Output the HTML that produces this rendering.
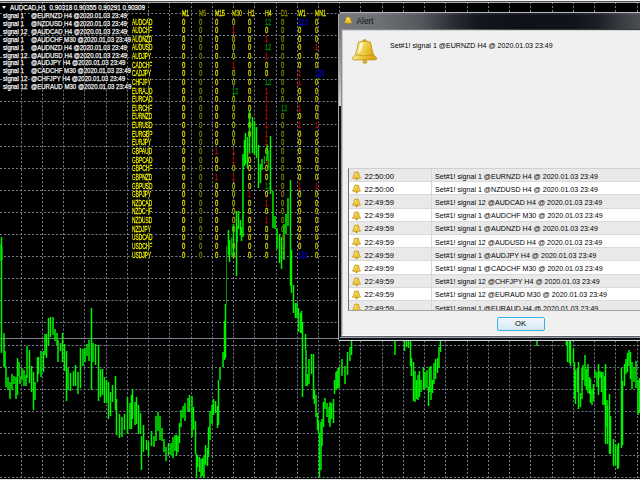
<!DOCTYPE html>
<html><head><meta charset="utf-8"><style>
html,body{margin:0;padding:0;}
body{width:640px;height:480px;overflow:hidden;background:#000;position:relative;font-family:"Liberation Sans",sans-serif;}
#top0{position:absolute;left:0;top:0;width:640px;height:1px;background:#f2f2f2}
#top1{position:absolute;left:0;top:1px;width:640px;height:1px;background:#505050}
#top2{position:absolute;left:0;top:2px;width:640px;height:1px;background:#aaaaaa}
#bot{position:absolute;left:0;top:479px;width:640px;height:1px;background:#dcdcdc}
svg.chart{position:absolute;left:0;top:0}
.sg{position:absolute;white-space:pre;background:linear-gradient(#000,#000) 0 0.6px/100% 5.6px no-repeat;font-size:7px;line-height:7px;color:#f4f4f4;-webkit-text-stroke:0.25px #f4f4f4;transform-origin:0 0;transform:scaleX(0.866)}
.tb{position:absolute;white-space:pre;background:linear-gradient(#000,#000) 0 0.7px/100% 6.4px no-repeat;will-change:transform;-webkit-text-stroke:0.3px currentColor;font-size:8.5px;line-height:8px;transform-origin:0 0;transform:scaleX(0.66)}
.tbn{transform:scaleX(0.57)}
.tbh{transform:scaleX(0.6)}
#hdr{position:absolute;left:10px;top:4px;white-space:pre;background:linear-gradient(#000,#000) 0 0.6px/100% 5.6px no-repeat;font-size:7px;line-height:7px;color:#f4f4f4;-webkit-text-stroke:0.25px #f4f4f4;transform-origin:0 0;transform:scaleX(0.892)}
#tri{position:absolute;left:1.5px;top:6px;width:0;height:0;border-left:2.5px solid transparent;border-right:2.5px solid transparent;border-top:3px solid #f0f0f0}
#ttl{position:absolute;left:356.5px;top:17px;font-size:8.3px;line-height:8px;color:#101010;}
.ic{position:absolute}
#msg{position:absolute;left:389.5px;top:42px;white-space:pre;font-size:7.6px;line-height:8px;color:#000;transform-origin:0 0;transform:scaleX(0.932)}
#lst{position:absolute;left:348px;top:168px;width:292px;height:141px;overflow:hidden;border-left:1px solid #6a7078;border-top:1px solid #d0d0d0;border-bottom:1px solid #a0a0a0;background:#fff}
.row{position:absolute;left:0;width:292px;height:13.2px;box-shadow:inset 0 -1px 0 #dadada}
.lt{position:absolute;top:3.6px;white-space:pre;font-size:7.6px;line-height:8px;color:#000;transform-origin:0 0}
#colsep{position:absolute;left:82px;top:0;width:1px;height:141px;background:#d8d8d8}
#okbtn{position:absolute;left:496.5px;top:316.5px;width:46px;height:12px;border:1px solid #3cb0e8;border-radius:2px;background:linear-gradient(#f2f8fc,#d4e8f4);text-align:center;font-size:7.6px;line-height:12px;color:#000}
</style></head><body>
<svg class="chart" width="640" height="480" viewBox="0 0 640 480">
<g stroke="#78828e" stroke-width="1"><line x1="21.5" y1="2" x2="21.5" y2="479" stroke-dasharray="1.9915 1.9915"/><line x1="42.5" y1="2" x2="42.5" y2="479" stroke-dasharray="1.9915 1.9915"/><line x1="63.5" y1="2" x2="63.5" y2="479" stroke-dasharray="1.9915 1.9915"/><line x1="84.5" y1="2" x2="84.5" y2="479" stroke-dasharray="1.9915 1.9915"/><line x1="106.5" y1="2" x2="106.5" y2="479" stroke-dasharray="1.9915 1.9915"/><line x1="127.5" y1="2" x2="127.5" y2="479" stroke-dasharray="1.9915 1.9915"/><line x1="148.5" y1="2" x2="148.5" y2="479" stroke-dasharray="1.9915 1.9915"/><line x1="169.5" y1="2" x2="169.5" y2="479" stroke-dasharray="1.9915 1.9915"/><line x1="191.5" y1="2" x2="191.5" y2="479" stroke-dasharray="1.9915 1.9915"/><line x1="212.5" y1="2" x2="212.5" y2="479" stroke-dasharray="1.9915 1.9915"/><line x1="233.5" y1="2" x2="233.5" y2="479" stroke-dasharray="1.9915 1.9915"/><line x1="254.5" y1="2" x2="254.5" y2="479" stroke-dasharray="1.9915 1.9915"/><line x1="276.5" y1="2" x2="276.5" y2="479" stroke-dasharray="1.9915 1.9915"/><line x1="297.5" y1="2" x2="297.5" y2="479" stroke-dasharray="1.9915 1.9915"/><line x1="318.5" y1="2" x2="318.5" y2="479" stroke-dasharray="1.9915 1.9915"/><line x1="339.5" y1="2" x2="339.5" y2="479" stroke-dasharray="1.9915 1.9915"/><line x1="360.5" y1="2" x2="360.5" y2="479" stroke-dasharray="1.9915 1.9915"/><line x1="382.5" y1="2" x2="382.5" y2="479" stroke-dasharray="1.9915 1.9915"/><line x1="403.5" y1="2" x2="403.5" y2="479" stroke-dasharray="1.9915 1.9915"/><line x1="424.5" y1="2" x2="424.5" y2="479" stroke-dasharray="1.9915 1.9915"/><line x1="445.5" y1="2" x2="445.5" y2="479" stroke-dasharray="1.9915 1.9915"/><line x1="467.5" y1="2" x2="467.5" y2="479" stroke-dasharray="1.9915 1.9915"/><line x1="488.5" y1="2" x2="488.5" y2="479" stroke-dasharray="1.9915 1.9915"/><line x1="509.5" y1="2" x2="509.5" y2="479" stroke-dasharray="1.9915 1.9915"/><line x1="530.5" y1="2" x2="530.5" y2="479" stroke-dasharray="1.9915 1.9915"/><line x1="552.5" y1="2" x2="552.5" y2="479" stroke-dasharray="1.9915 1.9915"/><line x1="573.5" y1="2" x2="573.5" y2="479" stroke-dasharray="1.9915 1.9915"/><line x1="594.5" y1="2" x2="594.5" y2="479" stroke-dasharray="1.9915 1.9915"/><line x1="615.5" y1="2" x2="615.5" y2="479" stroke-dasharray="1.9915 1.9915"/><line x1="637.5" y1="2" x2="637.5" y2="479" stroke-dasharray="1.9915 1.9915"/><line x1="0" y1="13.5" x2="640" y2="13.5" stroke-dasharray="1.9915 1.9915"/><line x1="0" y1="35.5" x2="640" y2="35.5" stroke-dasharray="1.9915 1.9915"/><line x1="0" y1="57.5" x2="640" y2="57.5" stroke-dasharray="1.9915 1.9915"/><line x1="0" y1="79.5" x2="640" y2="79.5" stroke-dasharray="1.9915 1.9915"/><line x1="0" y1="101.5" x2="640" y2="101.5" stroke-dasharray="1.9915 1.9915"/><line x1="0" y1="124.5" x2="640" y2="124.5" stroke-dasharray="1.9915 1.9915"/><line x1="0" y1="146.5" x2="640" y2="146.5" stroke-dasharray="1.9915 1.9915"/><line x1="0" y1="168.5" x2="640" y2="168.5" stroke-dasharray="1.9915 1.9915"/><line x1="0" y1="190.5" x2="640" y2="190.5" stroke-dasharray="1.9915 1.9915"/><line x1="0" y1="212.5" x2="640" y2="212.5" stroke-dasharray="1.9915 1.9915"/><line x1="0" y1="234.5" x2="640" y2="234.5" stroke-dasharray="1.9915 1.9915"/><line x1="0" y1="256.5" x2="640" y2="256.5" stroke-dasharray="1.9915 1.9915"/><line x1="0" y1="278.5" x2="640" y2="278.5" stroke-dasharray="1.9915 1.9915"/><line x1="0" y1="300.5" x2="640" y2="300.5" stroke-dasharray="1.9915 1.9915"/><line x1="0" y1="322.5" x2="640" y2="322.5" stroke-dasharray="1.9915 1.9915"/><line x1="0" y1="345.5" x2="640" y2="345.5" stroke-dasharray="1.9915 1.9915"/><line x1="0" y1="367.5" x2="640" y2="367.5" stroke-dasharray="1.9915 1.9915"/><line x1="0" y1="389.5" x2="640" y2="389.5" stroke-dasharray="1.9915 1.9915"/><line x1="0" y1="411.5" x2="640" y2="411.5" stroke-dasharray="1.9915 1.9915"/><line x1="0" y1="433.5" x2="640" y2="433.5" stroke-dasharray="1.9915 1.9915"/><line x1="0" y1="455.5" x2="640" y2="455.5" stroke-dasharray="1.9915 1.9915"/><line x1="0" y1="477.5" x2="640" y2="477.5" stroke-dasharray="1.9915 1.9915"/></g>
<line x1="0" y1="338.5" x2="640" y2="338.5" stroke="#78828c" stroke-width="1"/>
</svg>
<div id="top0"></div><div id="top1"></div><div id="top2"></div><div id="bot"></div>
<div id="tri"></div>
<div id="hdr">AUDCAD,H1  0.90318 0.90355 0.90291 0.90309</div>
<div class="sg" style="left:2.5px;top:12.0px">signal 1</div><div class="sg" style="left:31px;top:12.0px">@EURNZD H4 @2020.01.03 23:49</div><div class="sg" style="left:2.5px;top:19.9px">signal 1</div><div class="sg" style="left:31px;top:19.9px">@NZDUSD H4 @2020.01.03 23:49</div><div class="sg" style="left:2.5px;top:27.8px">signal 12</div><div class="sg" style="left:31px;top:27.8px">@AUDCAD H4 @2020.01.03 23:49</div><div class="sg" style="left:2.5px;top:35.7px">signal 1</div><div class="sg" style="left:31px;top:35.7px">@AUDCHF M30 @2020.01.03 23:49</div><div class="sg" style="left:2.5px;top:43.6px">signal 1</div><div class="sg" style="left:31px;top:43.6px">@AUDNZD H4 @2020.01.03 23:49</div><div class="sg" style="left:2.5px;top:51.5px">signal 12</div><div class="sg" style="left:31px;top:51.5px">@AUDUSD H4 @2020.01.03 23:49</div><div class="sg" style="left:2.5px;top:59.4px">signal 1</div><div class="sg" style="left:31px;top:59.4px">@AUDJPY H4 @2020.01.03 23:49</div><div class="sg" style="left:2.5px;top:67.3px">signal 1</div><div class="sg" style="left:31px;top:67.3px">@CADCHF M30 @2020.01.03 23:49</div><div class="sg" style="left:2.5px;top:75.2px">signal 12</div><div class="sg" style="left:31px;top:75.2px">@CHFJPY H4 @2020.01.03 23:49</div><div class="sg" style="left:2.5px;top:83.1px">signal 12</div><div class="sg" style="left:31px;top:83.1px">@EURAUD M30 @2020.01.03 23:49</div>
<div class="tb tbh" style="left:182px;top:9.1px;color:#ffff00">M1</div><div class="tb tbh" style="left:198.6px;top:9.1px;color:#949400">M5</div><div class="tb tbh" style="left:215.1px;top:9.1px;color:#f4f400">M15</div><div class="tb tbh" style="left:231.7px;top:9.1px;color:#d0d000">M30</div><div class="tb tbh" style="left:248.25px;top:9.1px;color:#f4f400">H1</div><div class="tb tbh" style="left:264.8px;top:9.1px;color:#ecec00">H4</div><div class="tb tbh" style="left:281.4px;top:9.1px;color:#989800">D1</div><div class="tb tbh" style="left:297.9px;top:9.1px;color:#f4f400">W1</div><div class="tb tbh" style="left:314.5px;top:9.1px;color:#e0e000">MN1</div><div class="tb tbn" style="left:132px;top:17.5px;color:#f4f400">AUDCAD</div><div class="tb" style="left:182px;top:17.5px;color:#ffff00">0</div><div class="tb" style="left:198.6px;top:17.5px;color:#949400">0</div><div class="tb" style="left:215.1px;top:17.5px;color:#f4f400">0</div><div class="tb" style="left:231.7px;top:17.5px;color:#d0d000">0</div><div class="tb" style="left:248.25px;top:17.5px;color:#f4f400">0</div><div class="tb" style="left:264.8px;top:17.5px;color:#008a00">12</div><div class="tb" style="left:281.4px;top:17.5px;color:#989800">0</div><div class="tb" style="left:297.9px;top:17.5px;color:#0000e0">123</div><div class="tb" style="left:314.5px;top:17.5px;color:#e0e000">0</div><div class="tb tbn" style="left:132px;top:26.1px;color:#f4f400">AUDCHF</div><div class="tb" style="left:182px;top:26.1px;color:#ffff00">0</div><div class="tb" style="left:198.6px;top:26.1px;color:#949400">0</div><div class="tb" style="left:215.1px;top:26.1px;color:#f4f400">0</div><div class="tb" style="left:231.7px;top:26.1px;color:#e00000">1</div><div class="tb" style="left:248.25px;top:26.1px;color:#f4f400">0</div><div class="tb" style="left:264.8px;top:26.1px;color:#ecec00">0</div><div class="tb" style="left:281.4px;top:26.1px;color:#989800">0</div><div class="tb" style="left:297.9px;top:26.1px;color:#f4f400">0</div><div class="tb" style="left:314.5px;top:26.1px;color:#e0e000">0</div><div class="tb tbn" style="left:132px;top:34.8px;color:#f4f400">AUDNZD</div><div class="tb" style="left:182px;top:34.8px;color:#ffff00">0</div><div class="tb" style="left:198.6px;top:34.8px;color:#949400">0</div><div class="tb" style="left:215.1px;top:34.8px;color:#f4f400">0</div><div class="tb" style="left:231.7px;top:34.8px;color:#d0d000">0</div><div class="tb" style="left:248.25px;top:34.8px;color:#f4f400">0</div><div class="tb" style="left:264.8px;top:34.8px;color:#e00000">1</div><div class="tb" style="left:281.4px;top:34.8px;color:#989800">0</div><div class="tb" style="left:297.9px;top:34.8px;color:#f4f400">0</div><div class="tb" style="left:314.5px;top:34.8px;color:#e0e000">0</div><div class="tb tbn" style="left:132px;top:43.4px;color:#f4f400">AUDUSD</div><div class="tb" style="left:182px;top:43.4px;color:#ffff00">0</div><div class="tb" style="left:198.6px;top:43.4px;color:#949400">0</div><div class="tb" style="left:215.1px;top:43.4px;color:#f4f400">0</div><div class="tb" style="left:231.7px;top:43.4px;color:#d0d000">0</div><div class="tb" style="left:248.25px;top:43.4px;color:#f4f400">0</div><div class="tb" style="left:264.8px;top:43.4px;color:#008a00">12</div><div class="tb" style="left:281.4px;top:43.4px;color:#989800">0</div><div class="tb" style="left:297.9px;top:43.4px;color:#f4f400">0</div><div class="tb" style="left:314.5px;top:43.4px;color:#e00000">1</div><div class="tb tbn" style="left:132px;top:52.0px;color:#f4f400">AUDJPY</div><div class="tb" style="left:182px;top:52.0px;color:#ffff00">0</div><div class="tb" style="left:198.6px;top:52.0px;color:#949400">0</div><div class="tb" style="left:215.1px;top:52.0px;color:#f4f400">0</div><div class="tb" style="left:231.7px;top:52.0px;color:#d0d000">0</div><div class="tb" style="left:248.25px;top:52.0px;color:#f4f400">0</div><div class="tb" style="left:264.8px;top:52.0px;color:#e00000">1</div><div class="tb" style="left:281.4px;top:52.0px;color:#989800">0</div><div class="tb" style="left:297.9px;top:52.0px;color:#f4f400">0</div><div class="tb" style="left:314.5px;top:52.0px;color:#e0e000">0</div><div class="tb tbn" style="left:132px;top:60.7px;color:#f4f400">CADCHF</div><div class="tb" style="left:182px;top:60.7px;color:#ffff00">0</div><div class="tb" style="left:198.6px;top:60.7px;color:#949400">0</div><div class="tb" style="left:215.1px;top:60.7px;color:#f4f400">0</div><div class="tb" style="left:231.7px;top:60.7px;color:#e00000">1</div><div class="tb" style="left:248.25px;top:60.7px;color:#f4f400">0</div><div class="tb" style="left:264.8px;top:60.7px;color:#ecec00">0</div><div class="tb" style="left:281.4px;top:60.7px;color:#989800">0</div><div class="tb" style="left:297.9px;top:60.7px;color:#f4f400">0</div><div class="tb" style="left:314.5px;top:60.7px;color:#e0e000">0</div><div class="tb tbn" style="left:132px;top:69.3px;color:#f4f400">CADJPY</div><div class="tb" style="left:182px;top:69.3px;color:#ffff00">0</div><div class="tb" style="left:198.6px;top:69.3px;color:#949400">0</div><div class="tb" style="left:215.1px;top:69.3px;color:#f4f400">0</div><div class="tb" style="left:231.7px;top:69.3px;color:#d0d000">0</div><div class="tb" style="left:248.25px;top:69.3px;color:#f4f400">0</div><div class="tb" style="left:264.8px;top:69.3px;color:#ecec00">0</div><div class="tb" style="left:281.4px;top:69.3px;color:#989800">0</div><div class="tb" style="left:297.9px;top:69.3px;color:#e00000">1</div><div class="tb" style="left:314.5px;top:69.3px;color:#0000e0">123</div><div class="tb tbn" style="left:132px;top:77.9px;color:#f4f400">CHFJPY</div><div class="tb" style="left:182px;top:77.9px;color:#ffff00">0</div><div class="tb" style="left:198.6px;top:77.9px;color:#949400">0</div><div class="tb" style="left:215.1px;top:77.9px;color:#f4f400">0</div><div class="tb" style="left:231.7px;top:77.9px;color:#d0d000">0</div><div class="tb" style="left:248.25px;top:77.9px;color:#f4f400">0</div><div class="tb" style="left:264.8px;top:77.9px;color:#008a00">12</div><div class="tb" style="left:281.4px;top:77.9px;color:#989800">0</div><div class="tb" style="left:297.9px;top:77.9px;color:#e00000">1</div><div class="tb" style="left:314.5px;top:77.9px;color:#e0e000">0</div><div class="tb tbn" style="left:132px;top:86.5px;color:#f4f400">EURAUD</div><div class="tb" style="left:182px;top:86.5px;color:#ffff00">0</div><div class="tb" style="left:198.6px;top:86.5px;color:#949400">0</div><div class="tb" style="left:215.1px;top:86.5px;color:#f4f400">0</div><div class="tb" style="left:231.7px;top:86.5px;color:#008a00">12</div><div class="tb" style="left:248.25px;top:86.5px;color:#f4f400">0</div><div class="tb" style="left:264.8px;top:86.5px;color:#e00000">1</div><div class="tb" style="left:281.4px;top:86.5px;color:#989800">0</div><div class="tb" style="left:297.9px;top:86.5px;color:#f4f400">0</div><div class="tb" style="left:314.5px;top:86.5px;color:#e0e000">0</div><div class="tb tbn" style="left:132px;top:95.2px;color:#f4f400">EURCAD</div><div class="tb" style="left:182px;top:95.2px;color:#ffff00">0</div><div class="tb" style="left:198.6px;top:95.2px;color:#949400">0</div><div class="tb" style="left:215.1px;top:95.2px;color:#f4f400">0</div><div class="tb" style="left:231.7px;top:95.2px;color:#d0d000">0</div><div class="tb" style="left:248.25px;top:95.2px;color:#f4f400">0</div><div class="tb" style="left:264.8px;top:95.2px;color:#e00000">1</div><div class="tb" style="left:281.4px;top:95.2px;color:#989800">0</div><div class="tb" style="left:297.9px;top:95.2px;color:#f4f400">0</div><div class="tb" style="left:314.5px;top:95.2px;color:#e0e000">0</div><div class="tb tbn" style="left:132px;top:103.8px;color:#f4f400">EURCHF</div><div class="tb" style="left:182px;top:103.8px;color:#ffff00">0</div><div class="tb" style="left:198.6px;top:103.8px;color:#949400">0</div><div class="tb" style="left:215.1px;top:103.8px;color:#f4f400">0</div><div class="tb" style="left:231.7px;top:103.8px;color:#d0d000">0</div><div class="tb" style="left:248.25px;top:103.8px;color:#f4f400">0</div><div class="tb" style="left:264.8px;top:103.8px;color:#e00000">1</div><div class="tb" style="left:281.4px;top:103.8px;color:#008a00">12</div><div class="tb" style="left:297.9px;top:103.8px;color:#e00000">1</div><div class="tb" style="left:314.5px;top:103.8px;color:#e0e000">0</div><div class="tb tbn" style="left:132px;top:112.4px;color:#f4f400">EURNZD</div><div class="tb" style="left:182px;top:112.4px;color:#ffff00">0</div><div class="tb" style="left:198.6px;top:112.4px;color:#949400">0</div><div class="tb" style="left:215.1px;top:112.4px;color:#f4f400">0</div><div class="tb" style="left:231.7px;top:112.4px;color:#d0d000">0</div><div class="tb" style="left:248.25px;top:112.4px;color:#f4f400">0</div><div class="tb" style="left:264.8px;top:112.4px;color:#e00000">1</div><div class="tb" style="left:281.4px;top:112.4px;color:#989800">0</div><div class="tb" style="left:297.9px;top:112.4px;color:#f4f400">0</div><div class="tb" style="left:314.5px;top:112.4px;color:#e0e000">0</div><div class="tb tbn" style="left:132px;top:121.1px;color:#f4f400">EURUSD</div><div class="tb" style="left:182px;top:121.1px;color:#ffff00">0</div><div class="tb" style="left:198.6px;top:121.1px;color:#949400">0</div><div class="tb" style="left:215.1px;top:121.1px;color:#f4f400">0</div><div class="tb" style="left:231.7px;top:121.1px;color:#d0d000">0</div><div class="tb" style="left:248.25px;top:121.1px;color:#f4f400">0</div><div class="tb" style="left:264.8px;top:121.1px;color:#e00000">1</div><div class="tb" style="left:281.4px;top:121.1px;color:#989800">0</div><div class="tb" style="left:297.9px;top:121.1px;color:#e00000">1</div><div class="tb" style="left:314.5px;top:121.1px;color:#e00000">1</div><div class="tb tbn" style="left:132px;top:129.7px;color:#f4f400">EURGBP</div><div class="tb" style="left:182px;top:129.7px;color:#ffff00">0</div><div class="tb" style="left:198.6px;top:129.7px;color:#949400">0</div><div class="tb" style="left:215.1px;top:129.7px;color:#f4f400">0</div><div class="tb" style="left:231.7px;top:129.7px;color:#d0d000">0</div><div class="tb" style="left:248.25px;top:129.7px;color:#f4f400">0</div><div class="tb" style="left:264.8px;top:129.7px;color:#e00000">1</div><div class="tb" style="left:281.4px;top:129.7px;color:#989800">0</div><div class="tb" style="left:297.9px;top:129.7px;color:#f4f400">0</div><div class="tb" style="left:314.5px;top:129.7px;color:#e0e000">0</div><div class="tb tbn" style="left:132px;top:138.3px;color:#f4f400">EURJPY</div><div class="tb" style="left:182px;top:138.3px;color:#ffff00">0</div><div class="tb" style="left:198.6px;top:138.3px;color:#949400">0</div><div class="tb" style="left:215.1px;top:138.3px;color:#f4f400">0</div><div class="tb" style="left:231.7px;top:138.3px;color:#d0d000">0</div><div class="tb" style="left:248.25px;top:138.3px;color:#e00000">1</div><div class="tb" style="left:264.8px;top:138.3px;color:#e00000">1</div><div class="tb" style="left:281.4px;top:138.3px;color:#989800">0</div><div class="tb" style="left:297.9px;top:138.3px;color:#f4f400">0</div><div class="tb" style="left:314.5px;top:138.3px;color:#e0e000">0</div><div class="tb tbn" style="left:132px;top:147.0px;color:#f4f400">GBPAUD</div><div class="tb" style="left:182px;top:147.0px;color:#ffff00">0</div><div class="tb" style="left:198.6px;top:147.0px;color:#949400">0</div><div class="tb" style="left:215.1px;top:147.0px;color:#e00000">1</div><div class="tb" style="left:231.7px;top:147.0px;color:#e00000">1</div><div class="tb" style="left:248.25px;top:147.0px;color:#e00000">1</div><div class="tb" style="left:264.8px;top:147.0px;color:#ecec00">0</div><div class="tb" style="left:281.4px;top:147.0px;color:#989800">0</div><div class="tb" style="left:297.9px;top:147.0px;color:#f4f400">0</div><div class="tb" style="left:314.5px;top:147.0px;color:#e0e000">0</div><div class="tb tbn" style="left:132px;top:155.6px;color:#f4f400">GBPCAD</div><div class="tb" style="left:182px;top:155.6px;color:#ffff00">0</div><div class="tb" style="left:198.6px;top:155.6px;color:#949400">0</div><div class="tb" style="left:215.1px;top:155.6px;color:#f4f400">0</div><div class="tb" style="left:231.7px;top:155.6px;color:#e00000">1</div><div class="tb" style="left:248.25px;top:155.6px;color:#f4f400">0</div><div class="tb" style="left:264.8px;top:155.6px;color:#e00000">1</div><div class="tb" style="left:281.4px;top:155.6px;color:#989800">0</div><div class="tb" style="left:297.9px;top:155.6px;color:#f4f400">0</div><div class="tb" style="left:314.5px;top:155.6px;color:#e0e000">0</div><div class="tb tbn" style="left:132px;top:164.2px;color:#f4f400">GBPCHF</div><div class="tb" style="left:182px;top:164.2px;color:#ffff00">0</div><div class="tb" style="left:198.6px;top:164.2px;color:#949400">0</div><div class="tb" style="left:215.1px;top:164.2px;color:#f4f400">0</div><div class="tb" style="left:231.7px;top:164.2px;color:#d0d000">0</div><div class="tb" style="left:248.25px;top:164.2px;color:#f4f400">0</div><div class="tb" style="left:264.8px;top:164.2px;color:#ecec00">0</div><div class="tb" style="left:281.4px;top:164.2px;color:#989800">0</div><div class="tb" style="left:297.9px;top:164.2px;color:#f4f400">0</div><div class="tb" style="left:314.5px;top:164.2px;color:#e0e000">0</div><div class="tb tbn" style="left:132px;top:172.8px;color:#f4f400">GBPNZD</div><div class="tb" style="left:182px;top:172.8px;color:#ffff00">0</div><div class="tb" style="left:198.6px;top:172.8px;color:#949400">0</div><div class="tb" style="left:215.1px;top:172.8px;color:#e00000">1</div><div class="tb" style="left:231.7px;top:172.8px;color:#e00000">1</div><div class="tb" style="left:248.25px;top:172.8px;color:#f4f400">0</div><div class="tb" style="left:264.8px;top:172.8px;color:#ecec00">0</div><div class="tb" style="left:281.4px;top:172.8px;color:#989800">0</div><div class="tb" style="left:297.9px;top:172.8px;color:#f4f400">0</div><div class="tb" style="left:314.5px;top:172.8px;color:#e0e000">0</div><div class="tb tbn" style="left:132px;top:181.5px;color:#f4f400">GBPUSD</div><div class="tb" style="left:182px;top:181.5px;color:#ffff00">0</div><div class="tb" style="left:198.6px;top:181.5px;color:#949400">0</div><div class="tb" style="left:215.1px;top:181.5px;color:#f4f400">0</div><div class="tb" style="left:231.7px;top:181.5px;color:#d0d000">0</div><div class="tb" style="left:248.25px;top:181.5px;color:#f4f400">0</div><div class="tb" style="left:264.8px;top:181.5px;color:#008a00">12</div><div class="tb" style="left:281.4px;top:181.5px;color:#989800">0</div><div class="tb" style="left:297.9px;top:181.5px;color:#e00000">1</div><div class="tb" style="left:314.5px;top:181.5px;color:#e00000">1</div><div class="tb tbn" style="left:132px;top:190.1px;color:#f4f400">GBPJPY</div><div class="tb" style="left:182px;top:190.1px;color:#ffff00">0</div><div class="tb" style="left:198.6px;top:190.1px;color:#949400">0</div><div class="tb" style="left:215.1px;top:190.1px;color:#f4f400">0</div><div class="tb" style="left:231.7px;top:190.1px;color:#d0d000">0</div><div class="tb" style="left:248.25px;top:190.1px;color:#e00000">1</div><div class="tb" style="left:264.8px;top:190.1px;color:#ecec00">0</div><div class="tb" style="left:281.4px;top:190.1px;color:#989800">0</div><div class="tb" style="left:297.9px;top:190.1px;color:#f4f400">0</div><div class="tb" style="left:314.5px;top:190.1px;color:#e0e000">0</div><div class="tb tbn" style="left:132px;top:198.7px;color:#f4f400">NZDCAD</div><div class="tb" style="left:182px;top:198.7px;color:#ffff00">0</div><div class="tb" style="left:198.6px;top:198.7px;color:#949400">0</div><div class="tb" style="left:215.1px;top:198.7px;color:#f4f400">0</div><div class="tb" style="left:231.7px;top:198.7px;color:#d0d000">0</div><div class="tb" style="left:248.25px;top:198.7px;color:#f4f400">0</div><div class="tb" style="left:264.8px;top:198.7px;color:#e00000">1</div><div class="tb" style="left:281.4px;top:198.7px;color:#989800">0</div><div class="tb" style="left:297.9px;top:198.7px;color:#f4f400">0</div><div class="tb" style="left:314.5px;top:198.7px;color:#e0e000">0</div><div class="tb tbn" style="left:132px;top:207.4px;color:#f4f400">NZDCHF</div><div class="tb" style="left:182px;top:207.4px;color:#ffff00">0</div><div class="tb" style="left:198.6px;top:207.4px;color:#949400">0</div><div class="tb" style="left:215.1px;top:207.4px;color:#f4f400">0</div><div class="tb" style="left:231.7px;top:207.4px;color:#d0d000">0</div><div class="tb" style="left:248.25px;top:207.4px;color:#f4f400">0</div><div class="tb" style="left:264.8px;top:207.4px;color:#ecec00">0</div><div class="tb" style="left:281.4px;top:207.4px;color:#989800">0</div><div class="tb" style="left:297.9px;top:207.4px;color:#f4f400">0</div><div class="tb" style="left:314.5px;top:207.4px;color:#e0e000">0</div><div class="tb tbn" style="left:132px;top:216.0px;color:#f4f400">NZDUSD</div><div class="tb" style="left:182px;top:216.0px;color:#ffff00">0</div><div class="tb" style="left:198.6px;top:216.0px;color:#949400">0</div><div class="tb" style="left:215.1px;top:216.0px;color:#f4f400">0</div><div class="tb" style="left:231.7px;top:216.0px;color:#d0d000">0</div><div class="tb" style="left:248.25px;top:216.0px;color:#f4f400">0</div><div class="tb" style="left:264.8px;top:216.0px;color:#e00000">1</div><div class="tb" style="left:281.4px;top:216.0px;color:#989800">0</div><div class="tb" style="left:297.9px;top:216.0px;color:#f4f400">0</div><div class="tb" style="left:314.5px;top:216.0px;color:#e0e000">0</div><div class="tb tbn" style="left:132px;top:224.6px;color:#f4f400">NZDJPY</div><div class="tb" style="left:182px;top:224.6px;color:#ffff00">0</div><div class="tb" style="left:198.6px;top:224.6px;color:#949400">0</div><div class="tb" style="left:215.1px;top:224.6px;color:#f4f400">0</div><div class="tb" style="left:231.7px;top:224.6px;color:#d0d000">0</div><div class="tb" style="left:248.25px;top:224.6px;color:#f4f400">0</div><div class="tb" style="left:264.8px;top:224.6px;color:#ecec00">0</div><div class="tb" style="left:281.4px;top:224.6px;color:#989800">0</div><div class="tb" style="left:297.9px;top:224.6px;color:#f4f400">0</div><div class="tb" style="left:314.5px;top:224.6px;color:#e0e000">0</div><div class="tb tbn" style="left:132px;top:233.3px;color:#f4f400">USDCAD</div><div class="tb" style="left:182px;top:233.3px;color:#ffff00">0</div><div class="tb" style="left:198.6px;top:233.3px;color:#949400">0</div><div class="tb" style="left:215.1px;top:233.3px;color:#f4f400">0</div><div class="tb" style="left:231.7px;top:233.3px;color:#e00000">1</div><div class="tb" style="left:248.25px;top:233.3px;color:#f4f400">0</div><div class="tb" style="left:264.8px;top:233.3px;color:#ecec00">0</div><div class="tb" style="left:281.4px;top:233.3px;color:#e00000">1</div><div class="tb" style="left:297.9px;top:233.3px;color:#f4f400">0</div><div class="tb" style="left:314.5px;top:233.3px;color:#e0e000">0</div><div class="tb tbn" style="left:132px;top:241.9px;color:#f4f400">USDCHF</div><div class="tb" style="left:182px;top:241.9px;color:#ffff00">0</div><div class="tb" style="left:198.6px;top:241.9px;color:#949400">0</div><div class="tb" style="left:215.1px;top:241.9px;color:#f4f400">0</div><div class="tb" style="left:231.7px;top:241.9px;color:#d0d000">0</div><div class="tb" style="left:248.25px;top:241.9px;color:#f4f400">0</div><div class="tb" style="left:264.8px;top:241.9px;color:#ecec00">0</div><div class="tb" style="left:281.4px;top:241.9px;color:#e00000">1</div><div class="tb" style="left:297.9px;top:241.9px;color:#f4f400">0</div><div class="tb" style="left:314.5px;top:241.9px;color:#e0e000">0</div><div class="tb tbn" style="left:132px;top:250.5px;color:#f4f400">USDJPY</div><div class="tb" style="left:182px;top:250.5px;color:#ffff00">0</div><div class="tb" style="left:198.6px;top:250.5px;color:#949400">0</div><div class="tb" style="left:215.1px;top:250.5px;color:#f4f400">0</div><div class="tb" style="left:231.7px;top:250.5px;color:#d0d000">0</div><div class="tb" style="left:248.25px;top:250.5px;color:#f4f400">0</div><div class="tb" style="left:264.8px;top:250.5px;color:#ecec00">0</div><div class="tb" style="left:281.4px;top:250.5px;color:#989800">0</div><div class="tb" style="left:297.9px;top:250.5px;color:#0000e0">123</div><div class="tb" style="left:314.5px;top:250.5px;color:#e0e000">0</div>
<svg class="chart" width="640" height="480" viewBox="0 0 640 480">
<g><line x1="0.5" y1="244.0" x2="0.5" y2="261.0" stroke="#009000" stroke-width="1.0"/><line x1="1.5" y1="237.0" x2="1.5" y2="353.0" stroke="#00f400" stroke-width="1.5"/><line x1="2.5" y1="247.0" x2="2.5" y2="260.0" stroke="#009000" stroke-width="1.0"/><line x1="4.0" y1="333.0" x2="4.0" y2="367.0" stroke="#00f400" stroke-width="1.5"/><line x1="5.0" y1="351.0" x2="5.0" y2="366.0" stroke="#00f400" stroke-width="1.5"/><line x1="6.0" y1="366.0" x2="6.0" y2="387.0" stroke="#00f400" stroke-width="1.5"/><line x1="8.0" y1="377.0" x2="8.0" y2="390.0" stroke="#00f400" stroke-width="1.5"/><line x1="10.0" y1="382.0" x2="10.0" y2="399.0" stroke="#00f400" stroke-width="1.5"/><line x1="12.0" y1="374.0" x2="12.0" y2="390.0" stroke="#00f400" stroke-width="1.5"/><line x1="14.0" y1="376.0" x2="14.0" y2="384.0" stroke="#00f400" stroke-width="1.5"/><line x1="16.0" y1="377.0" x2="16.0" y2="399.0" stroke="#00f400" stroke-width="1.5"/><line x1="17.5" y1="358.0" x2="17.5" y2="395.0" stroke="#00f400" stroke-width="1.5"/><line x1="19.0" y1="362.0" x2="19.0" y2="376.0" stroke="#00f400" stroke-width="1.5"/><line x1="20.0" y1="376.0" x2="20.0" y2="384.0" stroke="#00f400" stroke-width="1.5"/><line x1="22.0" y1="368.0" x2="22.0" y2="380.0" stroke="#00f400" stroke-width="1.5"/><line x1="24.0" y1="370.0" x2="24.0" y2="386.0" stroke="#00f400" stroke-width="1.5"/><line x1="26.0" y1="375.0" x2="26.0" y2="386.0" stroke="#00f400" stroke-width="1.5"/><line x1="27.0" y1="346.0" x2="27.0" y2="378.0" stroke="#00f400" stroke-width="1.5"/><line x1="29.5" y1="350.0" x2="29.5" y2="383.0" stroke="#00f400" stroke-width="1.5"/><line x1="31.5" y1="366.0" x2="31.5" y2="392.0" stroke="#00f400" stroke-width="1.5"/><line x1="33.5" y1="372.0" x2="33.5" y2="410.0" stroke="#00f400" stroke-width="1.5"/><line x1="35.0" y1="382.0" x2="35.0" y2="400.0" stroke="#00f400" stroke-width="1.5"/><line x1="37.5" y1="357.0" x2="37.5" y2="382.0" stroke="#00f400" stroke-width="1.5"/><line x1="38.5" y1="357.0" x2="38.5" y2="374.0" stroke="#00f400" stroke-width="1.5"/><line x1="41.0" y1="351.0" x2="41.0" y2="377.0" stroke="#00f400" stroke-width="1.5"/><line x1="43.5" y1="351.0" x2="43.5" y2="372.0" stroke="#00f400" stroke-width="1.5"/><line x1="45.0" y1="334.0" x2="45.0" y2="355.0" stroke="#00f400" stroke-width="1.5"/><line x1="46.5" y1="334.0" x2="46.5" y2="358.0" stroke="#00f400" stroke-width="1.5"/><line x1="48.5" y1="318.0" x2="48.5" y2="345.0" stroke="#00f400" stroke-width="1.5"/><line x1="50.5" y1="317.0" x2="50.5" y2="337.0" stroke="#00f400" stroke-width="1.5"/><line x1="53.0" y1="317.0" x2="53.0" y2="335.0" stroke="#00f400" stroke-width="1.5"/><line x1="55.0" y1="329.0" x2="55.0" y2="341.0" stroke="#00f400" stroke-width="1.5"/><line x1="57.0" y1="333.0" x2="57.0" y2="345.0" stroke="#00f400" stroke-width="1.5"/><line x1="58.0" y1="340.0" x2="58.0" y2="362.0" stroke="#00f400" stroke-width="1.5"/><line x1="60.5" y1="343.0" x2="60.5" y2="351.0" stroke="#00f400" stroke-width="1.5"/><line x1="62.5" y1="333.0" x2="62.5" y2="362.0" stroke="#00f400" stroke-width="1.5"/><line x1="64.5" y1="344.0" x2="64.5" y2="371.0" stroke="#00f400" stroke-width="1.5"/><line x1="66.5" y1="351.0" x2="66.5" y2="401.0" stroke="#00f400" stroke-width="1.5"/><line x1="68.0" y1="368.0" x2="68.0" y2="390.0" stroke="#00f400" stroke-width="1.5"/><line x1="70.5" y1="373.0" x2="70.5" y2="391.0" stroke="#00f400" stroke-width="1.5"/><line x1="73.5" y1="371.0" x2="73.5" y2="386.0" stroke="#00f400" stroke-width="1.5"/><line x1="75.5" y1="365.0" x2="75.5" y2="386.0" stroke="#00f400" stroke-width="1.5"/><line x1="78.0" y1="372.0" x2="78.0" y2="394.0" stroke="#00f400" stroke-width="1.5"/><line x1="80.5" y1="348.0" x2="80.5" y2="388.0" stroke="#00f400" stroke-width="1.5"/><line x1="83.0" y1="349.0" x2="83.0" y2="366.0" stroke="#00f400" stroke-width="1.5"/><line x1="85.0" y1="348.0" x2="85.0" y2="362.0" stroke="#00f400" stroke-width="1.5"/><line x1="87.0" y1="344.0" x2="87.0" y2="356.0" stroke="#00f400" stroke-width="1.5"/><line x1="89.0" y1="340.0" x2="89.0" y2="361.0" stroke="#00f400" stroke-width="1.5"/><line x1="91.5" y1="308.0" x2="91.5" y2="390.0" stroke="#00f400" stroke-width="1.5"/><line x1="93.0" y1="343.0" x2="93.0" y2="362.0" stroke="#00f400" stroke-width="1.5"/><line x1="95.5" y1="344.0" x2="95.5" y2="365.0" stroke="#00f400" stroke-width="1.5"/><line x1="98.5" y1="345.0" x2="98.5" y2="401.0" stroke="#00f400" stroke-width="1.5"/><line x1="100.5" y1="369.0" x2="100.5" y2="397.0" stroke="#00f400" stroke-width="1.5"/><line x1="102.5" y1="369.0" x2="102.5" y2="395.0" stroke="#00f400" stroke-width="1.5"/><line x1="104.5" y1="377.0" x2="104.5" y2="403.0" stroke="#00f400" stroke-width="1.5"/><line x1="106.5" y1="380.0" x2="106.5" y2="403.0" stroke="#00f400" stroke-width="1.5"/><line x1="108.5" y1="382.0" x2="108.5" y2="419.0" stroke="#00f400" stroke-width="1.5"/><line x1="110.5" y1="392.0" x2="110.5" y2="416.0" stroke="#00f400" stroke-width="1.5"/><line x1="112.5" y1="385.0" x2="112.5" y2="402.0" stroke="#00f400" stroke-width="1.5"/><line x1="115.5" y1="376.0" x2="115.5" y2="410.0" stroke="#00f400" stroke-width="1.5"/><line x1="116.5" y1="399.0" x2="116.5" y2="435.0" stroke="#00f400" stroke-width="1.5"/><line x1="119.5" y1="414.0" x2="119.5" y2="438.0" stroke="#00f400" stroke-width="1.5"/><line x1="122.0" y1="417.0" x2="122.0" y2="437.0" stroke="#00f400" stroke-width="1.5"/><line x1="124.5" y1="414.0" x2="124.5" y2="430.0" stroke="#00f400" stroke-width="1.5"/><line x1="127.5" y1="397.0" x2="127.5" y2="434.0" stroke="#00f400" stroke-width="1.5"/><line x1="130.0" y1="403.0" x2="130.0" y2="429.0" stroke="#00f400" stroke-width="1.5"/><line x1="131.5" y1="395.0" x2="131.5" y2="429.0" stroke="#00f400" stroke-width="1.5"/><line x1="132.5" y1="389.0" x2="132.5" y2="419.0" stroke="#00f400" stroke-width="1.5"/><line x1="135.0" y1="402.0" x2="135.0" y2="425.0" stroke="#00f400" stroke-width="1.5"/><line x1="136.5" y1="397.0" x2="136.5" y2="424.0" stroke="#00f400" stroke-width="1.5"/><line x1="138.5" y1="405.0" x2="138.5" y2="434.0" stroke="#00f400" stroke-width="1.5"/><line x1="140.5" y1="413.0" x2="140.5" y2="434.0" stroke="#00f400" stroke-width="1.5"/><line x1="141.5" y1="436.0" x2="141.5" y2="470.0" stroke="#00f400" stroke-width="1.5"/><line x1="143.5" y1="425.0" x2="143.5" y2="452.0" stroke="#00f400" stroke-width="1.5"/><line x1="146.5" y1="440.0" x2="146.5" y2="450.0" stroke="#00f400" stroke-width="1.5"/><line x1="148.5" y1="442.0" x2="148.5" y2="456.0" stroke="#00f400" stroke-width="1.5"/><line x1="151.5" y1="431.0" x2="151.5" y2="446.0" stroke="#00f400" stroke-width="1.5"/><line x1="154.0" y1="436.0" x2="154.0" y2="447.0" stroke="#00f400" stroke-width="1.5"/><line x1="156.0" y1="416.0" x2="156.0" y2="441.0" stroke="#00f400" stroke-width="1.5"/><line x1="158.0" y1="412.0" x2="158.0" y2="431.0" stroke="#00f400" stroke-width="1.5"/><line x1="160.0" y1="416.0" x2="160.0" y2="440.0" stroke="#00f400" stroke-width="1.5"/><line x1="162.0" y1="428.0" x2="162.0" y2="441.0" stroke="#00f400" stroke-width="1.5"/><line x1="164.0" y1="439.0" x2="164.0" y2="452.0" stroke="#00f400" stroke-width="1.5"/><line x1="166.0" y1="447.0" x2="166.0" y2="461.0" stroke="#00f400" stroke-width="1.5"/><line x1="168.5" y1="443.0" x2="168.5" y2="455.0" stroke="#00f400" stroke-width="1.5"/><line x1="171.0" y1="443.0" x2="171.0" y2="455.0" stroke="#00f400" stroke-width="1.5"/><line x1="173.0" y1="437.0" x2="173.0" y2="458.0" stroke="#00f400" stroke-width="1.5"/><line x1="175.0" y1="435.0" x2="175.0" y2="451.0" stroke="#00f400" stroke-width="1.5"/><line x1="176.5" y1="435.0" x2="176.5" y2="456.0" stroke="#00f400" stroke-width="1.5"/><line x1="178.0" y1="436.0" x2="178.0" y2="452.0" stroke="#00f400" stroke-width="1.5"/><line x1="179.5" y1="423.0" x2="179.5" y2="443.0" stroke="#00f400" stroke-width="1.5"/><line x1="181.0" y1="410.0" x2="181.0" y2="427.0" stroke="#00f400" stroke-width="1.5"/><line x1="183.0" y1="406.0" x2="183.0" y2="418.0" stroke="#00f400" stroke-width="1.5"/><line x1="185.0" y1="403.0" x2="185.0" y2="421.0" stroke="#00f400" stroke-width="1.5"/><line x1="188.0" y1="398.0" x2="188.0" y2="412.0" stroke="#00f400" stroke-width="1.5"/><line x1="189.5" y1="395.0" x2="189.5" y2="412.0" stroke="#00f400" stroke-width="1.5"/><line x1="192.0" y1="396.0" x2="192.0" y2="437.0" stroke="#00f400" stroke-width="1.5"/><line x1="193.5" y1="407.0" x2="193.5" y2="430.0" stroke="#00f400" stroke-width="1.5"/><line x1="195.5" y1="421.0" x2="195.5" y2="454.0" stroke="#00f400" stroke-width="1.5"/><line x1="196.5" y1="454.0" x2="196.5" y2="478.0" stroke="#00f400" stroke-width="1.5"/><line x1="197.5" y1="455.0" x2="197.5" y2="467.0" stroke="#00f400" stroke-width="1.5"/><line x1="199.5" y1="457.0" x2="199.5" y2="472.0" stroke="#00f400" stroke-width="1.5"/><line x1="201.0" y1="459.0" x2="201.0" y2="478.0" stroke="#00f400" stroke-width="1.5"/><line x1="202.5" y1="458.0" x2="202.5" y2="476.0" stroke="#00f400" stroke-width="1.5"/><line x1="204.0" y1="456.0" x2="204.0" y2="478.0" stroke="#00f400" stroke-width="1.5"/><line x1="205.5" y1="445.0" x2="205.5" y2="465.0" stroke="#00f400" stroke-width="1.5"/><line x1="207.5" y1="448.0" x2="207.5" y2="466.0" stroke="#00f400" stroke-width="1.5"/><line x1="208.5" y1="427.0" x2="208.5" y2="457.0" stroke="#00f400" stroke-width="1.5"/><line x1="210.0" y1="411.0" x2="210.0" y2="440.0" stroke="#00f400" stroke-width="1.5"/><line x1="212.0" y1="405.0" x2="212.0" y2="424.0" stroke="#00f400" stroke-width="1.5"/><line x1="213.5" y1="399.0" x2="213.5" y2="415.0" stroke="#00f400" stroke-width="1.5"/><line x1="215.5" y1="401.0" x2="215.5" y2="413.0" stroke="#00f400" stroke-width="1.5"/><line x1="217.5" y1="406.0" x2="217.5" y2="428.0" stroke="#00f400" stroke-width="1.5"/><line x1="218.5" y1="380.0" x2="218.5" y2="425.0" stroke="#00f400" stroke-width="1.5"/><line x1="220.0" y1="367.0" x2="220.0" y2="380.0" stroke="#00f400" stroke-width="1.5"/><line x1="223.0" y1="352.0" x2="223.0" y2="367.0" stroke="#00f400" stroke-width="1.5"/><line x1="224.5" y1="321.0" x2="224.5" y2="360.0" stroke="#00f400" stroke-width="1.5"/><line x1="225.5" y1="304.0" x2="225.5" y2="358.0" stroke="#00f400" stroke-width="1.5"/><line x1="226.5" y1="246.0" x2="226.5" y2="305.0" stroke="#009000" stroke-width="1.0"/><line x1="228.5" y1="230.0" x2="228.5" y2="255.0" stroke="#00f400" stroke-width="1.5"/><line x1="229.5" y1="240.0" x2="229.5" y2="262.0" stroke="#00f400" stroke-width="1.5"/><line x1="231.5" y1="237.4" x2="231.5" y2="255.5" stroke="#00a800" stroke-width="1.3"/><line x1="233.5" y1="224.0" x2="233.5" y2="257.0" stroke="#00f400" stroke-width="1.5"/><line x1="236.5" y1="211.0" x2="236.5" y2="276.0" stroke="#00f400" stroke-width="1.5"/><line x1="237.0" y1="226.0" x2="237.0" y2="242.0" stroke="#00f400" stroke-width="1.5"/><line x1="238.5" y1="211.0" x2="238.5" y2="229.0" stroke="#00f400" stroke-width="1.5"/><line x1="240.5" y1="220.0" x2="240.5" y2="235.0" stroke="#00f400" stroke-width="1.5"/><line x1="241.5" y1="227.0" x2="241.5" y2="241.0" stroke="#00f400" stroke-width="1.5"/><line x1="243.0" y1="154.0" x2="243.0" y2="237.0" stroke="#00f400" stroke-width="1.5"/><line x1="244.5" y1="140.0" x2="244.5" y2="166.0" stroke="#00f400" stroke-width="1.5"/><line x1="245.5" y1="133.0" x2="245.5" y2="164.0" stroke="#00f400" stroke-width="1.5"/><line x1="247.5" y1="137.0" x2="247.5" y2="168.0" stroke="#00f400" stroke-width="1.5"/><line x1="249.5" y1="110.0" x2="249.5" y2="153.0" stroke="#00f400" stroke-width="1.5"/><line x1="252.5" y1="117.0" x2="252.5" y2="153.0" stroke="#00f400" stroke-width="1.5"/><line x1="254.5" y1="121.0" x2="254.5" y2="155.0" stroke="#00f400" stroke-width="1.5"/><line x1="256.5" y1="127.0" x2="256.5" y2="158.0" stroke="#00f400" stroke-width="1.5"/><line x1="258.5" y1="145.0" x2="258.5" y2="188.0" stroke="#00f400" stroke-width="1.5"/><line x1="260.5" y1="164.0" x2="260.5" y2="183.0" stroke="#00f400" stroke-width="1.5"/><line x1="262.0" y1="159.0" x2="262.0" y2="170.0" stroke="#00f400" stroke-width="1.5"/><line x1="264.5" y1="156.0" x2="264.5" y2="163.9" stroke="#00a800" stroke-width="1.3"/><line x1="267.0" y1="145.0" x2="267.0" y2="161.0" stroke="#00f400" stroke-width="1.5"/><line x1="268.5" y1="150.1" x2="268.5" y2="169.7" stroke="#00a800" stroke-width="1.3"/><line x1="270.5" y1="136.0" x2="270.5" y2="194.0" stroke="#00f400" stroke-width="1.5"/><line x1="273.0" y1="191.0" x2="273.0" y2="228.0" stroke="#00f400" stroke-width="1.5"/><line x1="275.0" y1="216.0" x2="275.0" y2="229.0" stroke="#00f400" stroke-width="1.5"/><line x1="277.0" y1="228.0" x2="277.0" y2="249.0" stroke="#00f400" stroke-width="1.5"/><line x1="279.5" y1="234.0" x2="279.5" y2="263.0" stroke="#00f400" stroke-width="1.5"/><line x1="281.5" y1="237.0" x2="281.5" y2="269.0" stroke="#00f400" stroke-width="1.5"/><line x1="284.0" y1="224.0" x2="284.0" y2="260.0" stroke="#00f400" stroke-width="1.5"/><line x1="286.0" y1="214.0" x2="286.0" y2="234.0" stroke="#00f400" stroke-width="1.5"/><line x1="288.0" y1="198.0" x2="288.0" y2="226.0" stroke="#00f400" stroke-width="1.5"/><line x1="290.5" y1="180.0" x2="290.5" y2="286.0" stroke="#00f400" stroke-width="1.5"/><line x1="291.5" y1="250.0" x2="291.5" y2="293.0" stroke="#00f400" stroke-width="1.5"/><line x1="293.5" y1="285.0" x2="293.5" y2="313.0" stroke="#00f400" stroke-width="1.5"/><line x1="295.5" y1="303.0" x2="295.5" y2="318.0" stroke="#00f400" stroke-width="1.5"/><line x1="297.0" y1="303.0" x2="297.0" y2="318.0" stroke="#00f400" stroke-width="1.5"/><line x1="298.5" y1="308.0" x2="298.5" y2="332.0" stroke="#00f400" stroke-width="1.5"/><line x1="300.5" y1="313.0" x2="300.5" y2="333.0" stroke="#00f400" stroke-width="1.5"/><line x1="301.5" y1="311.0" x2="301.5" y2="333.0" stroke="#00f400" stroke-width="1.5"/><line x1="302.5" y1="322.0" x2="302.5" y2="397.0" stroke="#00f400" stroke-width="1.5"/><line x1="305.5" y1="334.0" x2="305.5" y2="350.0" stroke="#00f400" stroke-width="1.5"/><line x1="306.0" y1="350.0" x2="306.0" y2="386.0" stroke="#00f400" stroke-width="1.5"/><line x1="307.5" y1="374.0" x2="307.5" y2="386.0" stroke="#00f400" stroke-width="1.5"/><line x1="309.0" y1="359.0" x2="309.0" y2="384.0" stroke="#00f400" stroke-width="1.5"/><line x1="311.5" y1="354.0" x2="311.5" y2="374.0" stroke="#00f400" stroke-width="1.5"/><line x1="313.5" y1="354.0" x2="313.5" y2="399.0" stroke="#00f400" stroke-width="1.5"/><line x1="314.5" y1="390.0" x2="314.5" y2="404.0" stroke="#00f400" stroke-width="1.5"/><line x1="316.0" y1="395.0" x2="316.0" y2="417.0" stroke="#00f400" stroke-width="1.5"/><line x1="317.5" y1="413.0" x2="317.5" y2="430.0" stroke="#00f400" stroke-width="1.5"/><line x1="318.5" y1="420.0" x2="318.5" y2="434.0" stroke="#00f400" stroke-width="1.5"/><line x1="319.5" y1="433.0" x2="319.5" y2="477.0" stroke="#00f400" stroke-width="1.5"/><line x1="321.0" y1="422.0" x2="321.0" y2="470.0" stroke="#00f400" stroke-width="1.5"/><line x1="322.0" y1="419.0" x2="322.0" y2="446.0" stroke="#00f400" stroke-width="1.5"/><line x1="323.5" y1="402.0" x2="323.5" y2="427.0" stroke="#00f400" stroke-width="1.5"/><line x1="325.0" y1="398.0" x2="325.0" y2="409.0" stroke="#00f400" stroke-width="1.5"/><line x1="327.0" y1="403.0" x2="327.0" y2="417.0" stroke="#00f400" stroke-width="1.5"/><line x1="329.0" y1="407.0" x2="329.0" y2="423.0" stroke="#00f400" stroke-width="1.5"/><line x1="330.0" y1="402.0" x2="330.0" y2="427.0" stroke="#00f400" stroke-width="1.5"/><line x1="331.5" y1="403.0" x2="331.5" y2="419.0" stroke="#00f400" stroke-width="1.5"/><line x1="333.5" y1="399.0" x2="333.5" y2="423.0" stroke="#00f400" stroke-width="1.5"/><line x1="334.5" y1="380.0" x2="334.5" y2="394.0" stroke="#00f400" stroke-width="1.5"/><line x1="336.0" y1="372.0" x2="336.0" y2="390.0" stroke="#00f400" stroke-width="1.5"/><line x1="337.0" y1="371.0" x2="337.0" y2="389.0" stroke="#00f400" stroke-width="1.5"/><line x1="338.0" y1="368.0" x2="338.0" y2="388.0" stroke="#00f400" stroke-width="1.5"/><line x1="339.0" y1="367.0" x2="339.0" y2="388.0" stroke="#00f400" stroke-width="1.5"/><line x1="342.0" y1="359.0" x2="342.0" y2="376.0" stroke="#00f400" stroke-width="1.5"/><line x1="345.0" y1="366.0" x2="345.0" y2="384.0" stroke="#00f400" stroke-width="1.5"/><line x1="347.5" y1="352.0" x2="347.5" y2="375.0" stroke="#00f400" stroke-width="1.5"/><line x1="350.0" y1="347.0" x2="350.0" y2="361.0" stroke="#00f400" stroke-width="1.5"/><line x1="351.5" y1="340.0" x2="351.5" y2="355.0" stroke="#00f400" stroke-width="1.5"/><line x1="395.0" y1="336.0" x2="395.0" y2="355.0" stroke="#00f400" stroke-width="1.5"/><line x1="404.5" y1="336.0" x2="404.5" y2="351.0" stroke="#00f400" stroke-width="1.5"/><line x1="406.5" y1="336.0" x2="406.5" y2="347.0" stroke="#00f400" stroke-width="1.5"/><line x1="408.5" y1="336.0" x2="408.5" y2="348.0" stroke="#00f400" stroke-width="1.5"/><line x1="410.5" y1="336.0" x2="410.5" y2="366.0" stroke="#00f400" stroke-width="1.5"/><line x1="411.5" y1="358.0" x2="411.5" y2="376.0" stroke="#00f400" stroke-width="1.5"/><line x1="413.5" y1="362.0" x2="413.5" y2="401.0" stroke="#00f400" stroke-width="1.5"/><line x1="415.0" y1="371.0" x2="415.0" y2="402.0" stroke="#00f400" stroke-width="1.5"/><line x1="416.5" y1="380.0" x2="416.5" y2="399.0" stroke="#00f400" stroke-width="1.5"/><line x1="418.0" y1="375.0" x2="418.0" y2="400.0" stroke="#00f400" stroke-width="1.5"/><line x1="419.5" y1="371.0" x2="419.5" y2="397.0" stroke="#00f400" stroke-width="1.5"/><line x1="421.0" y1="380.0" x2="421.0" y2="392.0" stroke="#00f400" stroke-width="1.5"/><line x1="423.5" y1="367.0" x2="423.5" y2="389.0" stroke="#00f400" stroke-width="1.5"/><line x1="425.0" y1="372.0" x2="425.0" y2="389.0" stroke="#00f400" stroke-width="1.5"/><line x1="427.0" y1="370.0" x2="427.0" y2="388.0" stroke="#00f400" stroke-width="1.5"/><line x1="428.5" y1="387.0" x2="428.5" y2="406.0" stroke="#00f400" stroke-width="1.5"/><line x1="429.5" y1="367.0" x2="429.5" y2="392.0" stroke="#00f400" stroke-width="1.5"/><line x1="431.0" y1="366.0" x2="431.0" y2="400.0" stroke="#00f400" stroke-width="1.5"/><line x1="432.5" y1="380.0" x2="432.5" y2="393.0" stroke="#00f400" stroke-width="1.5"/><line x1="434.0" y1="363.0" x2="434.0" y2="384.0" stroke="#00f400" stroke-width="1.5"/><line x1="435.5" y1="359.0" x2="435.5" y2="379.0" stroke="#00f400" stroke-width="1.5"/><line x1="437.5" y1="358.0" x2="437.5" y2="373.0" stroke="#00f400" stroke-width="1.5"/><line x1="439.0" y1="347.0" x2="439.0" y2="368.0" stroke="#00f400" stroke-width="1.5"/><line x1="440.5" y1="336.0" x2="440.5" y2="352.0" stroke="#00f400" stroke-width="1.5"/><line x1="537.0" y1="336.0" x2="537.0" y2="346.0" stroke="#00f400" stroke-width="1.5"/><line x1="566.5" y1="336.0" x2="566.5" y2="345.0" stroke="#00f400" stroke-width="1.5"/><line x1="567.5" y1="336.0" x2="567.5" y2="362.0" stroke="#00f400" stroke-width="1.5"/><line x1="569.5" y1="336.0" x2="569.5" y2="363.0" stroke="#00f400" stroke-width="1.5"/><line x1="570.5" y1="336.0" x2="570.5" y2="366.0" stroke="#00f400" stroke-width="1.5"/><line x1="573.5" y1="348.0" x2="573.5" y2="363.0" stroke="#00f400" stroke-width="1.5"/><line x1="574.5" y1="362.0" x2="574.5" y2="399.0" stroke="#00f400" stroke-width="1.5"/><line x1="575.5" y1="370.0" x2="575.5" y2="404.0" stroke="#00f400" stroke-width="1.5"/><line x1="577.5" y1="368.0" x2="577.5" y2="392.0" stroke="#00f400" stroke-width="1.5"/><line x1="578.5" y1="362.0" x2="578.5" y2="409.0" stroke="#00f400" stroke-width="1.5"/><line x1="580.5" y1="393.0" x2="580.5" y2="407.0" stroke="#00f400" stroke-width="1.5"/><line x1="582.0" y1="368.0" x2="582.0" y2="399.0" stroke="#00f400" stroke-width="1.5"/><line x1="583.0" y1="365.0" x2="583.0" y2="380.0" stroke="#00f400" stroke-width="1.5"/><line x1="585.0" y1="355.0" x2="585.0" y2="386.0" stroke="#00f400" stroke-width="1.5"/><line x1="586.5" y1="369.0" x2="586.5" y2="390.0" stroke="#00f400" stroke-width="1.5"/><line x1="588.0" y1="364.0" x2="588.0" y2="393.0" stroke="#00f400" stroke-width="1.5"/><line x1="589.5" y1="377.0" x2="589.5" y2="394.0" stroke="#00f400" stroke-width="1.5"/><line x1="590.5" y1="379.0" x2="590.5" y2="403.0" stroke="#00f400" stroke-width="1.5"/><line x1="592.0" y1="389.0" x2="592.0" y2="405.0" stroke="#00f400" stroke-width="1.5"/><line x1="593.5" y1="384.0" x2="593.5" y2="401.0" stroke="#00f400" stroke-width="1.5"/><line x1="595.0" y1="370.0" x2="595.0" y2="378.0" stroke="#00f400" stroke-width="1.5"/><line x1="597.0" y1="372.0" x2="597.0" y2="387.0" stroke="#00f400" stroke-width="1.5"/><line x1="598.5" y1="364.0" x2="598.5" y2="395.0" stroke="#00f400" stroke-width="1.5"/><line x1="600.0" y1="371.0" x2="600.0" y2="378.0" stroke="#00f400" stroke-width="1.5"/><line x1="601.5" y1="372.0" x2="601.5" y2="392.0" stroke="#00f400" stroke-width="1.5"/><line x1="603.0" y1="372.0" x2="603.0" y2="405.0" stroke="#00f400" stroke-width="1.5"/><line x1="604.5" y1="376.0" x2="604.5" y2="405.0" stroke="#00f400" stroke-width="1.5"/><line x1="605.5" y1="364.0" x2="605.5" y2="444.0" stroke="#00f400" stroke-width="1.5"/><line x1="607.0" y1="400.0" x2="607.0" y2="427.0" stroke="#00f400" stroke-width="1.5"/><line x1="607.5" y1="406.0" x2="607.5" y2="444.0" stroke="#00f400" stroke-width="1.5"/><line x1="609.5" y1="394.0" x2="609.5" y2="454.0" stroke="#00f400" stroke-width="1.5"/><line x1="610.5" y1="416.0" x2="610.5" y2="454.0" stroke="#00f400" stroke-width="1.5"/><line x1="613.5" y1="439.0" x2="613.5" y2="466.0" stroke="#00f400" stroke-width="1.5"/><line x1="615.5" y1="444.0" x2="615.5" y2="465.0" stroke="#00f400" stroke-width="1.5"/><line x1="617.5" y1="445.0" x2="617.5" y2="469.0" stroke="#00f400" stroke-width="1.5"/><line x1="618.5" y1="443.0" x2="618.5" y2="468.0" stroke="#00f400" stroke-width="1.5"/><line x1="621.5" y1="368.0" x2="621.5" y2="448.0" stroke="#00f400" stroke-width="1.5"/><line x1="622.5" y1="381.0" x2="622.5" y2="445.0" stroke="#00f400" stroke-width="1.5"/><line x1="624.5" y1="364.0" x2="624.5" y2="386.0" stroke="#00f400" stroke-width="1.5"/><line x1="626.0" y1="359.0" x2="626.0" y2="374.0" stroke="#00f400" stroke-width="1.5"/><line x1="627.5" y1="353.0" x2="627.5" y2="372.0" stroke="#00f400" stroke-width="1.5"/><line x1="629.0" y1="350.0" x2="629.0" y2="366.0" stroke="#00f400" stroke-width="1.5"/><line x1="630.5" y1="352.0" x2="630.5" y2="379.0" stroke="#00f400" stroke-width="1.5"/><line x1="632.0" y1="362.0" x2="632.0" y2="389.0" stroke="#00f400" stroke-width="1.5"/><line x1="634.0" y1="367.0" x2="634.0" y2="382.0" stroke="#00f400" stroke-width="1.5"/><line x1="636.0" y1="361.0" x2="636.0" y2="388.0" stroke="#00f400" stroke-width="1.5"/><line x1="638.0" y1="380.0" x2="638.0" y2="415.0" stroke="#00f400" stroke-width="1.5"/><line x1="639.5" y1="378.0" x2="639.5" y2="413.0" stroke="#00f400" stroke-width="1.5"/></g>
</svg>
<div style="position:absolute;left:338px;top:12px;width:302px;height:329px;background:#0e131a;border-radius:2px 0 0 0"></div><div style="position:absolute;left:338px;top:14px;width:1px;height:326px;background:#a4a6aa"></div><div style="position:absolute;left:340px;top:12px;width:300px;height:1px;background:#b8babc"></div><div style="position:absolute;left:339px;top:13px;width:1px;height:1px;background:#a0a2a6"></div><div style="position:absolute;left:339px;top:13px;width:301px;height:16px;background:linear-gradient(90deg,#75787c 0%,#6c7074 14%,#55595e 27%,#2a2e34 38%,#12171d 46%,#0d1218 60%,#0f141a 78%,#1c2026 86%,#3a3e43 94%,#4a4e52 100%)"></div><div style="position:absolute;left:339px;top:13px;width:301px;height:2px;background:rgba(255,255,255,0.06)"></div><div style="position:absolute;left:339px;top:29px;width:3px;height:77px;background:linear-gradient(#74787c,#a8aaae 60%,#d2d4d6)"></div><div style="position:absolute;left:341px;top:29px;width:1px;height:307px;background:#8a8e92"></div><div style="position:absolute;left:342px;top:29px;width:1px;height:307px;background:#c8c8c8"></div><div style="position:absolute;left:342px;top:29px;width:298px;height:1px;background:linear-gradient(90deg,#8e9296,#6a6e72 30%,#3a3e44 60%,#34383c)"></div><div style="position:absolute;left:342px;top:30px;width:298px;height:1px;background:#d4d4d4"></div><div style="position:absolute;left:343px;top:31px;width:297px;height:304px;background:#f0f0f0"></div><div style="position:absolute;left:342px;top:335px;width:298px;height:1px;background:#fafafa"></div><div style="position:absolute;left:341px;top:336px;width:299px;height:1px;background:#5c6064"></div><div style="position:absolute;left:340px;top:337px;width:300px;height:1px;background:#9da1a5"></div><div style="position:absolute;left:339px;top:340px;width:301px;height:1px;background:#cfd1d3"></div><svg class="ic" style="left:344px;top:16px" width="8.5" height="9.5" viewBox="0 0 27 28"><path d="M7.6 3.2 C9.2 1.9 17.8 1.9 19.4 3.2 C20.4 6 21 12 22.6 15.5 C23.6 17.2 25.3 18.2 25.9 19.2 C26.1 20.3 25 20.9 23.5 20.9 L3.6 20.9 C2 20.9 1 20.3 1.2 19.2 C1.8 18.2 3.5 17.2 4.5 15.5 C6 12 6.6 6 7.6 3.2 Z" fill="#f0c838" stroke="#b88a10" stroke-width="2"/><ellipse cx="13.9" cy="23.5" rx="3" ry="2.6" fill="#e0b020" stroke="#b08010" stroke-width="1.2"/><path d="M10 5 L12.5 5 L9.5 13 L8 13 Z" fill="#fff8d0" opacity="0.8"/></svg><div id="ttl">Alert</div><svg style="position:absolute;left:351px;top:38.5px" width="27" height="26" viewBox="0 0 27 26">
<defs><linearGradient id="bg1" x1="0" y1="0" x2="1" y2="0.3"><stop offset="0" stop-color="#f4d050"/><stop offset="0.35" stop-color="#fbe27a"/><stop offset="0.7" stop-color="#e8c030"/><stop offset="1" stop-color="#d8a818"/></linearGradient></defs>
<ellipse cx="13.6" cy="1.8" rx="1.7" ry="1.2" fill="#d8a820" stroke="#b08010" stroke-width="0.5"/>
<ellipse cx="13.9" cy="22.7" rx="1.9" ry="1.7" fill="#e8b828" stroke="#a87c10" stroke-width="0.6"/>
<path d="M7.6 3.2 C9.2 1.9 17.8 1.9 19.4 3.2 C20.4 6 21 12 22.6 15.5 C23.6 17.2 25.3 18.2 25.9 19.2 C26.1 20.3 25 20.9 23.5 20.9 L3.6 20.9 C2 20.9 1 20.3 1.2 19.2 C1.8 18.2 3.5 17.2 4.5 15.5 C6 12 6.6 6 7.6 3.2 Z" fill="url(#bg1)" stroke="#b88a10" stroke-width="0.75"/>
<path d="M4.6 15.6 C9 17.2 18 17.2 22.5 15.6" stroke="#c09018" stroke-width="0.8" fill="none"/>
<path d="M9.3 4 L12.6 4 L9 13.5 L7.4 13.5 Z" fill="#fffbe0" opacity="0.85"/>
</svg><div id="msg">Set#1! signal 1 @EURNZD H4 @ 2020.01.03 23:49</div><div id="lst"><div class="row" style="top:0.0px;background:#e9e9e9"><svg class="ic" style="left:3.3px;top:2.3px" width="9" height="10" viewBox="0 0 27 28"><path d="M7.6 3.2 C9.2 1.9 17.8 1.9 19.4 3.2 C20.4 6 21 12 22.6 15.5 C23.6 17.2 25.3 18.2 25.9 19.2 C26.1 20.3 25 20.9 23.5 20.9 L3.6 20.9 C2 20.9 1 20.3 1.2 19.2 C1.8 18.2 3.5 17.2 4.5 15.5 C6 12 6.6 6 7.6 3.2 Z" fill="#f0c838" stroke="#b88a10" stroke-width="2"/><ellipse cx="13.9" cy="23.5" rx="3" ry="2.6" fill="#e0b020" stroke="#b08010" stroke-width="1.2"/><path d="M10 5 L12.5 5 L9.5 13 L8 13 Z" fill="#fff8d0" opacity="0.8"/></svg><div class="lt" style="left:15.5px">22:50:00</div><div class="lt" style="left:86px;transform:scaleX(0.933)">Set#1! signal 1 @EURNZD H4 @ 2020.01.03 23:49</div></div><div class="row" style="top:13.2px;background:#ffffff"><svg class="ic" style="left:3.3px;top:2.3px" width="9" height="10" viewBox="0 0 27 28"><path d="M7.6 3.2 C9.2 1.9 17.8 1.9 19.4 3.2 C20.4 6 21 12 22.6 15.5 C23.6 17.2 25.3 18.2 25.9 19.2 C26.1 20.3 25 20.9 23.5 20.9 L3.6 20.9 C2 20.9 1 20.3 1.2 19.2 C1.8 18.2 3.5 17.2 4.5 15.5 C6 12 6.6 6 7.6 3.2 Z" fill="#f0c838" stroke="#b88a10" stroke-width="2"/><ellipse cx="13.9" cy="23.5" rx="3" ry="2.6" fill="#e0b020" stroke="#b08010" stroke-width="1.2"/><path d="M10 5 L12.5 5 L9.5 13 L8 13 Z" fill="#fff8d0" opacity="0.8"/></svg><div class="lt" style="left:15.5px">22:50:00</div><div class="lt" style="left:86px;transform:scaleX(0.933)">Set#1! signal 1 @NZDUSD H4 @ 2020.01.03 23:49</div></div><div class="row" style="top:26.4px;background:#e9e9e9"><svg class="ic" style="left:3.3px;top:2.3px" width="9" height="10" viewBox="0 0 27 28"><path d="M7.6 3.2 C9.2 1.9 17.8 1.9 19.4 3.2 C20.4 6 21 12 22.6 15.5 C23.6 17.2 25.3 18.2 25.9 19.2 C26.1 20.3 25 20.9 23.5 20.9 L3.6 20.9 C2 20.9 1 20.3 1.2 19.2 C1.8 18.2 3.5 17.2 4.5 15.5 C6 12 6.6 6 7.6 3.2 Z" fill="#f0c838" stroke="#b88a10" stroke-width="2"/><ellipse cx="13.9" cy="23.5" rx="3" ry="2.6" fill="#e0b020" stroke="#b08010" stroke-width="1.2"/><path d="M10 5 L12.5 5 L9.5 13 L8 13 Z" fill="#fff8d0" opacity="0.8"/></svg><div class="lt" style="left:15.5px">22:49:59</div><div class="lt" style="left:86px;transform:scaleX(0.933)">Set#1! signal 12 @AUDCAD H4 @ 2020.01.03 23:49</div></div><div class="row" style="top:39.6px;background:#ffffff"><svg class="ic" style="left:3.3px;top:2.3px" width="9" height="10" viewBox="0 0 27 28"><path d="M7.6 3.2 C9.2 1.9 17.8 1.9 19.4 3.2 C20.4 6 21 12 22.6 15.5 C23.6 17.2 25.3 18.2 25.9 19.2 C26.1 20.3 25 20.9 23.5 20.9 L3.6 20.9 C2 20.9 1 20.3 1.2 19.2 C1.8 18.2 3.5 17.2 4.5 15.5 C6 12 6.6 6 7.6 3.2 Z" fill="#f0c838" stroke="#b88a10" stroke-width="2"/><ellipse cx="13.9" cy="23.5" rx="3" ry="2.6" fill="#e0b020" stroke="#b08010" stroke-width="1.2"/><path d="M10 5 L12.5 5 L9.5 13 L8 13 Z" fill="#fff8d0" opacity="0.8"/></svg><div class="lt" style="left:15.5px">22:49:59</div><div class="lt" style="left:86px;transform:scaleX(0.933)">Set#1! signal 1 @AUDCHF M30 @ 2020.01.03 23:49</div></div><div class="row" style="top:52.8px;background:#e9e9e9"><svg class="ic" style="left:3.3px;top:2.3px" width="9" height="10" viewBox="0 0 27 28"><path d="M7.6 3.2 C9.2 1.9 17.8 1.9 19.4 3.2 C20.4 6 21 12 22.6 15.5 C23.6 17.2 25.3 18.2 25.9 19.2 C26.1 20.3 25 20.9 23.5 20.9 L3.6 20.9 C2 20.9 1 20.3 1.2 19.2 C1.8 18.2 3.5 17.2 4.5 15.5 C6 12 6.6 6 7.6 3.2 Z" fill="#f0c838" stroke="#b88a10" stroke-width="2"/><ellipse cx="13.9" cy="23.5" rx="3" ry="2.6" fill="#e0b020" stroke="#b08010" stroke-width="1.2"/><path d="M10 5 L12.5 5 L9.5 13 L8 13 Z" fill="#fff8d0" opacity="0.8"/></svg><div class="lt" style="left:15.5px">22:49:59</div><div class="lt" style="left:86px;transform:scaleX(0.933)">Set#1! signal 1 @AUDNZD H4 @ 2020.01.03 23:49</div></div><div class="row" style="top:66.0px;background:#ffffff"><svg class="ic" style="left:3.3px;top:2.3px" width="9" height="10" viewBox="0 0 27 28"><path d="M7.6 3.2 C9.2 1.9 17.8 1.9 19.4 3.2 C20.4 6 21 12 22.6 15.5 C23.6 17.2 25.3 18.2 25.9 19.2 C26.1 20.3 25 20.9 23.5 20.9 L3.6 20.9 C2 20.9 1 20.3 1.2 19.2 C1.8 18.2 3.5 17.2 4.5 15.5 C6 12 6.6 6 7.6 3.2 Z" fill="#f0c838" stroke="#b88a10" stroke-width="2"/><ellipse cx="13.9" cy="23.5" rx="3" ry="2.6" fill="#e0b020" stroke="#b08010" stroke-width="1.2"/><path d="M10 5 L12.5 5 L9.5 13 L8 13 Z" fill="#fff8d0" opacity="0.8"/></svg><div class="lt" style="left:15.5px">22:49:59</div><div class="lt" style="left:86px;transform:scaleX(0.933)">Set#1! signal 12 @AUDUSD H4 @ 2020.01.03 23:49</div></div><div class="row" style="top:79.2px;background:#e9e9e9"><svg class="ic" style="left:3.3px;top:2.3px" width="9" height="10" viewBox="0 0 27 28"><path d="M7.6 3.2 C9.2 1.9 17.8 1.9 19.4 3.2 C20.4 6 21 12 22.6 15.5 C23.6 17.2 25.3 18.2 25.9 19.2 C26.1 20.3 25 20.9 23.5 20.9 L3.6 20.9 C2 20.9 1 20.3 1.2 19.2 C1.8 18.2 3.5 17.2 4.5 15.5 C6 12 6.6 6 7.6 3.2 Z" fill="#f0c838" stroke="#b88a10" stroke-width="2"/><ellipse cx="13.9" cy="23.5" rx="3" ry="2.6" fill="#e0b020" stroke="#b08010" stroke-width="1.2"/><path d="M10 5 L12.5 5 L9.5 13 L8 13 Z" fill="#fff8d0" opacity="0.8"/></svg><div class="lt" style="left:15.5px">22:49:59</div><div class="lt" style="left:86px;transform:scaleX(0.933)">Set#1! signal 1 @AUDJPY H4 @ 2020.01.03 23:49</div></div><div class="row" style="top:92.4px;background:#ffffff"><svg class="ic" style="left:3.3px;top:2.3px" width="9" height="10" viewBox="0 0 27 28"><path d="M7.6 3.2 C9.2 1.9 17.8 1.9 19.4 3.2 C20.4 6 21 12 22.6 15.5 C23.6 17.2 25.3 18.2 25.9 19.2 C26.1 20.3 25 20.9 23.5 20.9 L3.6 20.9 C2 20.9 1 20.3 1.2 19.2 C1.8 18.2 3.5 17.2 4.5 15.5 C6 12 6.6 6 7.6 3.2 Z" fill="#f0c838" stroke="#b88a10" stroke-width="2"/><ellipse cx="13.9" cy="23.5" rx="3" ry="2.6" fill="#e0b020" stroke="#b08010" stroke-width="1.2"/><path d="M10 5 L12.5 5 L9.5 13 L8 13 Z" fill="#fff8d0" opacity="0.8"/></svg><div class="lt" style="left:15.5px">22:49:59</div><div class="lt" style="left:86px;transform:scaleX(0.933)">Set#1! signal 1 @CADCHF M30 @ 2020.01.03 23:49</div></div><div class="row" style="top:105.6px;background:#e9e9e9"><svg class="ic" style="left:3.3px;top:2.3px" width="9" height="10" viewBox="0 0 27 28"><path d="M7.6 3.2 C9.2 1.9 17.8 1.9 19.4 3.2 C20.4 6 21 12 22.6 15.5 C23.6 17.2 25.3 18.2 25.9 19.2 C26.1 20.3 25 20.9 23.5 20.9 L3.6 20.9 C2 20.9 1 20.3 1.2 19.2 C1.8 18.2 3.5 17.2 4.5 15.5 C6 12 6.6 6 7.6 3.2 Z" fill="#f0c838" stroke="#b88a10" stroke-width="2"/><ellipse cx="13.9" cy="23.5" rx="3" ry="2.6" fill="#e0b020" stroke="#b08010" stroke-width="1.2"/><path d="M10 5 L12.5 5 L9.5 13 L8 13 Z" fill="#fff8d0" opacity="0.8"/></svg><div class="lt" style="left:15.5px">22:49:59</div><div class="lt" style="left:86px;transform:scaleX(0.933)">Set#1! signal 12 @CHFJPY H4 @ 2020.01.03 23:49</div></div><div class="row" style="top:118.8px;background:#ffffff"><svg class="ic" style="left:3.3px;top:2.3px" width="9" height="10" viewBox="0 0 27 28"><path d="M7.6 3.2 C9.2 1.9 17.8 1.9 19.4 3.2 C20.4 6 21 12 22.6 15.5 C23.6 17.2 25.3 18.2 25.9 19.2 C26.1 20.3 25 20.9 23.5 20.9 L3.6 20.9 C2 20.9 1 20.3 1.2 19.2 C1.8 18.2 3.5 17.2 4.5 15.5 C6 12 6.6 6 7.6 3.2 Z" fill="#f0c838" stroke="#b88a10" stroke-width="2"/><ellipse cx="13.9" cy="23.5" rx="3" ry="2.6" fill="#e0b020" stroke="#b08010" stroke-width="1.2"/><path d="M10 5 L12.5 5 L9.5 13 L8 13 Z" fill="#fff8d0" opacity="0.8"/></svg><div class="lt" style="left:15.5px">22:49:59</div><div class="lt" style="left:86px;transform:scaleX(0.933)">Set#1! signal 12 @EURAUD M30 @ 2020.01.03 23:49</div></div><div class="row" style="top:132.0px;background:#e9e9e9"><svg class="ic" style="left:3.3px;top:2.3px" width="9" height="10" viewBox="0 0 27 28"><path d="M7.6 3.2 C9.2 1.9 17.8 1.9 19.4 3.2 C20.4 6 21 12 22.6 15.5 C23.6 17.2 25.3 18.2 25.9 19.2 C26.1 20.3 25 20.9 23.5 20.9 L3.6 20.9 C2 20.9 1 20.3 1.2 19.2 C1.8 18.2 3.5 17.2 4.5 15.5 C6 12 6.6 6 7.6 3.2 Z" fill="#f0c838" stroke="#b88a10" stroke-width="2"/><ellipse cx="13.9" cy="23.5" rx="3" ry="2.6" fill="#e0b020" stroke="#b08010" stroke-width="1.2"/><path d="M10 5 L12.5 5 L9.5 13 L8 13 Z" fill="#fff8d0" opacity="0.8"/></svg><div class="lt" style="left:15.5px">22:49:59</div><div class="lt" style="left:86px;transform:scaleX(0.933)">Set#1! signal 1 @EURAUD H4 @ 2020.01.03 23:49</div></div><div id="colsep"></div></div><div id="okbtn">OK</div>
</body></html>
